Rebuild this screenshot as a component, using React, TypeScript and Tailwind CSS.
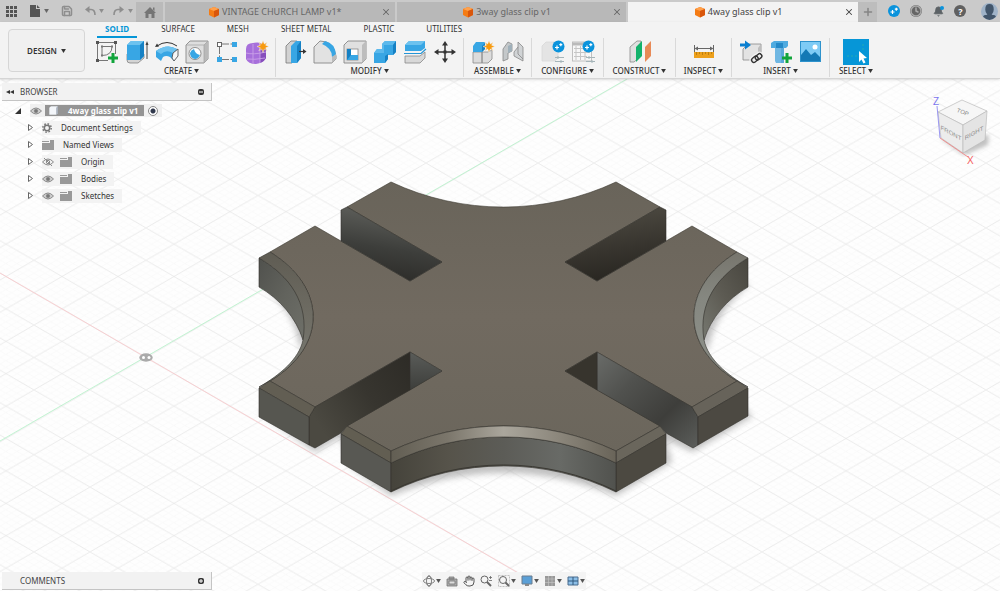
import React, { useState } from 'react';
import { Bell, Clock, Hand, Plus, Save, X } from 'lucide-react';

// ---------- small shared bits ----------

const Caret = ({ className = '' }: { className?: string }) => (
  <svg viewBox="0 0 6 5" className={`w-[5px] h-1 shrink-0 ${className}`} aria-hidden="true">
    <path d="M0 0H6L3 5Z" fill="currentColor" />
  </svg>
);

const OrangeCube = () => (
  <svg viewBox="0 0 12 12" className="size-3 shrink-0" aria-hidden="true">
    <path d="M1 3L6 1L11 3V9L6 11.5L1 9Z" fill="#f57c14" />
    <path d="M1 3L6 1L11 3L6 5Z" fill="#ffa14d" />
    <path d="M6 5L11 3V9L6 11.5Z" fill="#d9560b" />
  </svg>
);

const Star = ({ x, y }: { x: number; y: number }) => (
  <g transform={`translate(${x} ${y})`}>
    <path
      d="M0 -6L1.3 -2.6L4.2 -4.2L2.6 -1.3L6 0L2.6 1.3L4.2 4.2L1.3 2.6L0 6L-1.3 2.6L-4.2 4.2L-2.6 1.3L-6 0L-2.6 -1.3L-4.2 -4.2L-1.3 -2.6Z"
      fill="#f79a0e"
      stroke="#f3f3f3"
      strokeWidth=".5"
    />
  </g>
);

const GreenPlus = ({ x, y }: { x: number; y: number }) => (
  <path d={`M${x - 5} ${y}h10M${x} ${y - 5}v10`} stroke="#12a53c" strokeWidth="3" />
);

const Badge = ({ x, y }: { x: number; y: number }) => (
  <g transform={`translate(${x} ${y})`}>
    <circle r="6" fill="#0a93dc" />
    <path d="M-3.5 1h4M-1.5 -1v4M.8 -1.8h3M2.3 -3.3v3" stroke="#fff" strokeWidth="1.2" />
  </g>
);

const Icon26 = ({ children }: { children: React.ReactNode }) => (
  <svg viewBox="0 0 26 26" className="size-[26px]" fill="none" aria-hidden="true">
    {children}
  </svg>
);

const CurvedArrow = ({ flip = false }: { flip?: boolean }) => (
  <svg viewBox="0 0 12 10" className={`h-[10px] w-3 ${flip ? '-scale-x-100' : ''}`} aria-hidden="true">
    <path d="M2 3.500H6Q10 3.500 10 9" fill="none" stroke="currentColor" strokeWidth="1.600" />
    <path d="M0 3.500L4.500 0V7Z" fill="currentColor" />
  </svg>
);

// ---------- ribbon icons ----------

const icons: Record<string, React.ReactNode> = {
  sketch: (
    <>
      <path d="M3.500 3.500H21.500M3.500 3.500V21.500M21.500 5V15M5 21.500H14" stroke="#777" />
      <path d="M8 7.500H18Q18 16.500 8 16.500Z" stroke="#666" strokeWidth=".9" />
      <path d="M2 2h3v3h-3zM20 2h3v3h-3zM2 20h3v3h-3z" fill="#555" />
      <path d="M7 6.500h2v2h-2zM17 6.500h2v2h-2zM7 15.500h2v2h-2z" fill="#777" />
      <GreenPlus x={19} y={19} />
    </>
  ),
  extrude: (
    <>
      <path d="M3 18V21Q3 24 6 24H14L20 19V15H3Z" fill="#d4d4d4" stroke="#777" strokeWidth=".7" />
      <path d="M3 6L7 2H20V17L16 21H3Z" fill="#38a6e4" />
      <path d="M3 6L7 2H20L16 6Z" fill="#6cc2ef" />
      <path d="M16 6L20 2V17L16 21Z" fill="#1681c4" />
      <path d="M23 4V20" stroke="#444" />
      <path d="M21.500 6L23 2L24.500 6Z" fill="#444" />
    </>
  ),
  revolve: (
    <>
      <path d="M3 7Q13 0 23 7" stroke="#333" />
      <path d="M1 8L3 4.500L5 7.500Z" fill="#333" />
      <path d="M2 12Q13 4 23 10L24 15L20 22L16 18Q12 16 9 18L7 22L2 18Z" fill="#38a6e4" />
      <path d="M2 12Q13 4 23 10L19 14Q12 10 7 15Z" fill="#6cc2ef" />
      <path d="M19 14L24 10V17L20 22L18 19Z" fill="#f6f6f6" stroke="#555" strokeWidth=".9" />
    </>
  ),
  hole: (
    <>
      <path d="M2 6L6 2H24V20L20 24H2Z" fill="#dedede" stroke="#888" strokeWidth=".9" />
      <path d="M20 6L24 2V20L20 24Z" fill="#b9b9b9" />
      <path d="M2 6H20V24M20 6L24 2" stroke="#a0a0a0" strokeWidth=".7" />
      <circle cx="11" cy="14.500" r="6" fill="#fff" stroke="#777" strokeWidth=".8" />
      <path d="M6 14Q7 11 10 10Q11 15 16 16Q14 20 11 20Q6 19 6 14Z" fill="#38a6e4" />
    </>
  ),
  pattern: (
    <>
      <path d="M8 5H18M5.500 8V18M8 20.500H18" stroke="#777" strokeDasharray="7 1.500" />
      <rect x="3.500" y="3.500" width="4" height="4" fill="#fff" stroke="#666" />
      <path d="M18 3h5v5h-5zM3 18h5v5h-5zM18 18h5v5h-5z" fill="#38a6e4" />
    </>
  ),
  form: (
    <>
      <path d="M2 10Q2 4 9 4Q18 2 22 8V19Q19 24 12 25Q4 25 2 20Z" fill="#a76fdb" />
      <path d="M16 9Q23 8 22 13V19Q20 23 16 24Z" fill="#864ebc" />
      <path d="M2 14Q9 16 22 13M9 5V25M16 5V24M3 20Q10 21 21 19" stroke="#c9a0e8" strokeWidth=".9" />
      <Star x={19} y={7.5} />
    </>
  ),
  pressPull: (
    <>
      <path d="M4 7L9 2H15V19L10 24H4Z" fill="#d2d2d2" stroke="#777" strokeWidth=".8" />
      <path d="M9 7L14 2H19V19L15 24H9Z" fill="#38a6e4" />
      <path d="M15 7L19 2V19L15 24Z" fill="#1681c4" />
      <path d="M17 12.500H22" stroke="#333" strokeWidth="1.200" />
      <path d="M21 10L24.500 12.500L21 15Z" fill="#333" />
    </>
  ),
  fillet: (
    <>
      <path d="M2 8L8 2Q22 2 24 17V20L20 24H2Z" fill="#e2e2e2" stroke="#888" strokeWidth=".9" />
      <path d="M10 5L13 2Q23 4 24 16L20 18Q20 9 10 5Z" fill="#38a6e4" />
      <path d="M20 18L24 15V20L20 24Z" fill="#bcbcbc" />
    </>
  ),
  shell: (
    <>
      <path d="M2 6L6 2H24V20L20 24H2Z" fill="#e0e0e0" stroke="#888" strokeWidth=".9" />
      <path d="M20 6L24 2V20L20 24Z" fill="#bdbdbd" />
      <rect x="5" y="10" width="11" height="11" fill="#fff" stroke="#888" strokeWidth=".8" />
      <path d="M5 10L9 10V16L5 21ZM9 16H16V21H5Z" fill="#38a6e4" />
      <path d="M5 10H9V16L5 21Z" fill="#1681c4" />
    </>
  ),
  combine: (
    <>
      <path d="M2 14L5 10H10V5L13 2H24V13L21 16H16V20L13 24H2Z" fill="#38a6e4" />
      <path d="M2 14L5 10H10V5L13 2H24L21 6H12V14Z" fill="#5cb9ec" />
      <path d="M21 6L24 2V13L21 16ZM13 17L16 15V20L13 24Z" fill="#1681c4" />
    </>
  ),
  split: (
    <>
      <path d="M3 6L7 2H23V9L19 12H3Z" fill="#38a6e4" />
      <path d="M3 6L7 2H23L19 6Z" fill="#6cc2ef" />
      <path d="M2 14.500H19L24 10" stroke="#2495d6" strokeWidth="1.200" />
      <path d="M3 17H18L23 13V19L18 24H3Z" fill="#d8d8d8" stroke="#888" strokeWidth=".8" />
    </>
  ),
  move: (
    <>
      <path d="M13 4V22M4 13H22" stroke="#333" strokeWidth="1.500" />
      <path d="M13 2L16 6.500H10ZM13 24L16 19.500H10ZM2 13L6.500 10V16ZM24 13L19.500 10V16Z" fill="#333" />
      <rect x="11.500" y="11.500" width="3" height="3" fill="#333" />
    </>
  ),
  component: (
    <>
      <path d="M3 13H12V24H3ZM12 13H18L22 11V20L18 24H12Z" fill="#dcdcdc" stroke="#888" strokeWidth=".8" />
      <path d="M3 7L6 3H15V10L12 13H3Z" fill="#38a6e4" />
      <path d="M12 7L15 4V10L12 13Z" fill="#1681c4" />
      <Star x={19} y={7.5} />
    </>
  ),
  joint: (
    <>
      <path d="M3 10L8 3L12 5V12L8 14V20L3 22Z" fill="#c4c8ca" stroke="#888" strokeWidth=".8" />
      <path d="M8 7L12 5V12L8 14Z" fill="#9fb0ba" />
      <path d="M14 13L18 8V3L23 8V22L14 17Z" fill="#d0d3d5" stroke="#888" strokeWidth=".8" />
      <path d="M18 8V15L23 20" stroke="#888" strokeWidth=".8" />
    </>
  ),
  configure: (
    <>
      <path d="M2 7L6 3H18V19L15 22H2Z" fill="#e4e4e4" stroke="#d8d8d8" strokeWidth=".8" />
      <path d="M15 18.500H24M15 22.500H24M18 17V20M21 21V24" stroke="#a5b5b9" />
      <Badge x={18.5} y={7.5} />
    </>
  ),
  table: (
    <>
      <rect x="2.500" y="3" width="19" height="19" fill="#f7f7f7" stroke="#c0c0c0" />
      <path d="M2 5H15" stroke="#bababa" strokeWidth="3" />
      <path d="M4 9.500H20M4 13.500H20M4 17.500H17M6 7V21M10.500 7V21M15 7V21" stroke="#c6c6c6" />
      <path d="M16 18.500H25M16 22.500H25M19 17V20M22 21V24" stroke="#a5b5b9" />
      <Badge x={18.5} y={7.5} />
    </>
  ),
  construct: (
    <>
      <path d="M3 8L10 2H14V17L7 23H3Z" fill="#e0e0e0" stroke="#888" strokeWidth=".8" />
      <path d="M9 8L15 2V17L9 23Z" fill="#13b26b" />
      <path d="M18 8L24 2V17L18 23Z" fill="#e88a57" />
    </>
  ),
  inspect: (
    <>
      <path d="M3.500 6V13M22.500 6V13M5 9.500H21" stroke="#666" />
      <path d="M3.500 9.500L7 7.500V11.500ZM22.500 9.500L19 7.500V11.500Z" fill="#666" />
      <rect x="3" y="13" width="20" height="6" fill="#eda01b" />
      <path d="M5.500 13v3M8.500 13v2M11.500 13v3M14.500 13v2M17.500 13v3M20.500 13v2" stroke="#b0770f" strokeWidth=".8" />
    </>
  ),
  insertLink: (
    <>
      <path d="M5 10L10 5H23V17L20 21H5Z" fill="#e3e3e3" stroke="#888" strokeWidth=".8" />
      <path d="M20 9L23 5V17L20 21Z" fill="#bdbdbd" />
      <path d="M2 6H8" stroke="#0a7fd0" strokeWidth="3" />
      <path d="M7 1.500L13 6L7 10.500Z" fill="#0a7fd0" />
      <g stroke="#f2f2f2" strokeWidth="4">
        <rect x="13" y="18.500" width="7" height="4.500" rx="2" transform="rotate(-40 16 20)" />
        <rect x="17" y="16" width="7" height="4.500" rx="2" transform="rotate(-40 20 18)" />
      </g>
      <g stroke="#333" strokeWidth="1.400">
        <rect x="13" y="18.500" width="7" height="4.500" rx="2" transform="rotate(-40 16 20)" />
        <rect x="17" y="16" width="7" height="4.500" rx="2" transform="rotate(-40 20 18)" />
      </g>
    </>
  ),
  bolt: (
    <>
      <path d="M7 8H16V24H8L7 22Z" fill="#70b7e2" />
      <path d="M13 8H16V24H13Z" fill="#5aa8d8" />
      <path d="M3 4L6 2H20V7L18 9H3Z" fill="#4fabe0" />
      <path d="M8 4H15V9H8Z" fill="#2489c8" />
      <GreenPlus x={19} y={19} />
    </>
  ),
  image: (
    <>
      <rect x="2.500" y="2.500" width="20" height="20" fill="#7ecbf5" stroke="#2e92cc" />
      <path d="M3 16L8 10L13 16L17 13L22 18V22H3Z" fill="#1479b5" />
      <circle cx="17" cy="8" r="2.500" fill="#fff" />
    </>
  ),
  select: (
    <>
      <rect width="26" height="26" fill="#0696d7" />
      <path d="M4 17H14M20 5V12" stroke="#25a9b4" strokeDasharray="2 2" />
      <path d="M16 12L24 19L20.500 19.500L22.500 23.500L20.500 24.500L18.500 20.500L16 23Z" fill="#fff" />
    </>
  ),
};

interface ToolGroup {
  name: string;
  width: string;
  tools: string[];
}

const groups: ToolGroup[] = [
  { name: 'CREATE', width: 'w-[188px]', tools: ['sketch', 'extrude', 'revolve', 'hole', 'pattern', 'form'] },
  { name: 'MODIFY', width: 'w-[188px]', tools: ['pressPull', 'fillet', 'shell', 'combine', 'split', 'move'] },
  { name: 'ASSEMBLE', width: 'w-[68px]', tools: ['component', 'joint'] },
  { name: 'CONFIGURE', width: 'w-[72px]', tools: ['configure', 'table'] },
  { name: 'CONSTRUCT', width: 'w-[72px]', tools: ['construct'] },
  { name: 'INSPECT', width: 'w-[56px]', tools: ['inspect'] },
  { name: 'INSERT', width: 'w-[98px]', tools: ['insertLink', 'bolt', 'image'] },
  { name: 'SELECT', width: 'w-[52px]', tools: ['select'] },
];

const workspaceTabs = ['SOLID', 'SURFACE', 'MESH', 'SHEET METAL', 'PLASTIC', 'UTILITIES'];
const documents = ['VINTAGE CHURCH LAMP v1*', '3way glass clip v1', '4way glass clip v1'];

// ---------- title bar ----------

const TitleBar = () => (
  <header className="flex h-[22px] shrink-0 bg-[#cacaca] text-[#666]">
    <div className="flex w-[136px] shrink-0 items-center pl-[6px]">
      <button aria-label="Data panel" className="mr-[13px]">
        <svg viewBox="0 0 11 11" className="size-[11px]" fill="#555">
          {[0, 4, 8].map((y) => [0, 4, 8].map((x) => <rect key={`${x}${y}`} x={x} y={y} width="3" height="3" />))}
        </svg>
      </button>
      <button aria-label="File" className="mr-3 flex items-center gap-1">
        <svg viewBox="0 0 10 12" className="h-3 w-[10px]" fill="#555">
          <path d="M0 0H6V4H10V12H0ZM7 0L10 3H7Z" />
        </svg>
        <Caret />
      </button>
      <button aria-label="Save" className="mr-3 text-[#8e8e8e]">
        <Save size={12} strokeWidth={3} />
      </button>
      <button aria-label="Undo" className="mr-2 flex items-center gap-0.5 text-[#8e8e8e]">
        <CurvedArrow />
        <Caret />
      </button>
      <button aria-label="Redo" className="flex items-center gap-1 text-[#8e8e8e]">
        <CurvedArrow flip />
        <Caret />
      </button>
    </div>
    <button aria-label="Home" className="mr-0.5 mt-0.5 flex w-[27px] shrink-0 items-center justify-center bg-[#bababa]">
      <svg viewBox="0 0 12 12" className="size-3" fill="#757575">
        <path d="M6 1L12 7H10.500V12H7.500V8H4.500V12H1.500V7H0ZM9 1.500H10.500V5L9 3.500Z" />
      </svg>
    </button>
    <nav className="flex min-w-0 flex-1 gap-0.5 pt-0.5">
      {documents.map((doc, i) => (
        <div
          key={doc}
          className={`flex min-w-0 flex-1 items-center px-1 ${i === 2 ? 'bg-[#f3f3f3] text-[#444]' : 'bg-[#b8b8b8] text-[#666]'}`}
        >
          <button className="flex min-w-0 flex-1 items-center justify-center gap-0.5 whitespace-nowrap text-[9px] leading-3">
            <OrangeCube />
            {doc}
          </button>
          <button aria-label={`Close ${doc}`}>
            <X size={10} strokeWidth={2.5} />
          </button>
        </div>
      ))}
    </nav>
    <div className="flex w-[142px] shrink-0 items-center justify-between pr-0.5">
      <button aria-label="New document" className="mt-0.5 flex h-5 w-[19px] items-center justify-center bg-[#bdbdbd]">
        <Plus size={12} strokeWidth={3} className="text-[#858585]" />
      </button>
      <button aria-label="Extensions">
        <svg viewBox="0 0 12 12" className="size-3">
          <Badge x={6} y={6} />
        </svg>
      </button>
      <button aria-label="Job status" className="rounded-full bg-[#666]">
        <Clock size={12} strokeWidth={3} className="text-[#aaa]" />
      </button>
      <button aria-label="Notifications" className="relative">
        <Bell size={11} fill="#5c6266" className="text-[#5c6266]" />
        <span className="absolute right-0 top-0 size-1 rounded-full bg-[#0a93dc]" />
      </button>
      <button
        aria-label="Help"
        className="flex size-3 items-center justify-center rounded-full bg-[#606060] text-[9px] font-bold leading-none text-white"
      >
        ?
      </button>
      <button aria-label="Account" className="ml-1">
        <svg viewBox="0 0 16 16" className="size-[17px]">
          <circle cx="8" cy="8" r="8" fill="#9fb3c8" />
          <path d="M4 6Q4 1 8 1Q12 1 12 6Q12 9 10 11Q14 11 14 13Q11 16 8 16Q5 16 2 13Q2 11 6 11Q4 9 4 6Z" fill="#42566b" />
        </svg>
      </button>
    </div>
  </header>
);

// ---------- ribbon ----------

const Ribbon = () => {
  const [activeTab, setActiveTab] = useState('SOLID');

  return (
    <section className="relative z-10 flex h-[57px] shrink-0 border-b border-[#d5d5d5] bg-[#f3f3f3] text-[#333] shadow-sm">
      <div className="w-[88px] shrink-0 pl-2 pt-[7px]">
        <button className="flex h-[43px] w-[77px] items-center justify-center gap-1 rounded-sm border border-[#d6d6d6] bg-[#f0f0f0] text-[8px] font-semibold">
          DESIGN
          <Caret />
        </button>
      </div>
      <div className="min-w-0 flex-1">
        <nav className="flex h-4 gap-4 pl-[9px]">
          {workspaceTabs.map((tab) => (
            <button
              key={tab}
              onClick={() => setActiveTab(tab)}
              className={`whitespace-nowrap border-b-2 px-2 text-[8px] leading-3 ${
                tab === activeTab ? 'border-[#0696d7] font-bold text-[#0696d7]' : 'border-transparent'
              }`}
            >
              {tab}
            </button>
          ))}
        </nav>
        <div className="flex">
          {groups.map((group) => (
            <div
              key={group.name}
              className={`flex shrink-0 flex-col items-center border-r border-[#d9d9d9] last:border-r-0 ${group.width}`}
            >
              <div className="flex pt-px">
                {group.tools.map((tool) => (
                  <button key={tool} aria-label={tool} className="flex w-[30px] justify-center">
                    <Icon26>{icons[tool]}</Icon26>
                  </button>
                ))}
              </div>
              <button className="flex items-center gap-0.5 whitespace-nowrap text-[8px] font-medium leading-3">
                {group.name}
                <Caret />
              </button>
            </div>
          ))}
        </div>
      </div>
    </section>
  );
};

// ---------- browser tree ----------

const Eye = ({ hidden = false }: { hidden?: boolean }) => (
  <svg viewBox="0 0 12 8" className="h-2 w-3 shrink-0" fill="none" stroke="#8a8a8a" aria-hidden="true">
    <path d="M.5 4Q6 -2 11.500 4Q6 10 .5 4Z" fill={hidden ? 'none' : '#ccc'} />
    <circle cx="6" cy="4" r="1.700" fill={hidden ? 'none' : '#777'} />
    {hidden && <path d="M2 0L10 8" />}
  </svg>
);

const Folder = () => (
  <svg viewBox="0 0 12 10" className="h-[10px] w-3 shrink-0" fill="#999" aria-hidden="true">
    <path d="M0 1H7V2H0ZM8 0H12V10H0V3H8Z" />
  </svg>
);

const Gear = () => (
  <svg viewBox="0 0 10 10" className="size-[10px] shrink-0" fill="none" stroke="#777" aria-hidden="true">
    <circle cx="5" cy="5" r="2.700" strokeWidth="1.500" />
    <circle cx="5" cy="5" r="4.200" strokeDasharray="1.600 1.700" strokeWidth="1.500" />
  </svg>
);

const nodes = [
  { label: 'Document Settings', icon: <Gear /> },
  { label: 'Named Views', icon: <Folder /> },
  { label: 'Origin', icon: <Folder />, eye: 'off' },
  { label: 'Bodies', icon: <Folder />, eye: 'on' },
  { label: 'Sketches', icon: <Folder />, eye: 'on' },
];

const PanelBar = ({ title, sign, arrows }: { title: string; sign: string; arrows?: boolean }) => (
  <div className="flex h-[18px] items-center border-b border-r border-[#c4c4c4] bg-[#f2f2f2] pl-1 pr-[7px] text-[8px] text-[#444]">
    <span className="flex w-[14px]">
      {arrows && (
        <svg viewBox="0 0 8 6" className="h-[6px] w-2" fill="#333">
          <path d="M4 1V5L0 3ZM8 1V5L4 3Z" />
        </svg>
      )}
    </span>
    <span className="flex-1">{title}</span>
    <button aria-label={`Toggle ${title}`}>
      <svg viewBox="0 0 6 6" className="size-[6px]">
        <rect width="6" height="6" rx="2" fill="#333" />
        <path d={sign} stroke="#fff" />
      </svg>
    </button>
  </div>
);

const Browser = () => (
  <aside className="absolute left-0.5 top-1 w-[210px] text-[8px] text-[#333]">
    <PanelBar title="BROWSER" sign="M1 3H5" arrows />
    <div className="mt-px flex h-[17px] items-center pl-[13px]">
      <svg viewBox="0 0 6 6" className="mr-[9px] size-[6px]">
        <path d="M6 0V6H0Z" fill="#333" />
      </svg>
      <div className="flex h-[13px] items-center bg-[#f0f0f0] pr-1">
        <Eye />
        <button className="ml-[3px] flex h-[11px] items-center gap-[10px] bg-[#949494] pl-1 pr-[6px] font-bold text-white">
          <svg viewBox="0 0 10 10" className="size-[9px]">
            <path d="M0 2L2 0H10V8L8 10H0Z" fill="#f3f6fa" stroke="#777" strokeWidth=".5" />
            <path d="M8 2L10 0V8L8 10Z" fill="#a8b0bb" />
          </svg>
          4way glass clip v1
        </button>
        <label className="ml-1 flex">
          <input
            type="radio"
            aria-label="Activate component"
            defaultChecked
            className="size-[10px] appearance-none rounded-full border border-[#888] bg-[radial-gradient(circle,#30384c_2px,#fff_3px)]"
          />
        </label>
      </div>
    </div>
    <ul className="pl-[26px]">
      {nodes.map((node) => (
        <li key={node.label} className="flex h-[17px] items-center">
          <button aria-label={`Expand ${node.label}`} className="mr-[9px]">
            <svg viewBox="0 0 5 7" className="h-[7px] w-[5px]" fill="#fff" stroke="#666">
              <path d="M.5 .5L4.500 3.500L.5 6.500Z" />
            </svg>
          </button>
          <div className="flex h-[14px] items-center gap-[9px] bg-[#f3f3f3] pr-2">
            <span className="flex items-center gap-[6px]">
              {node.eye && <Eye hidden={node.eye === 'off'} />}
              {node.icon}
            </span>
            {node.label}
          </div>
        </li>
      ))}
    </ul>
  </aside>
);

// ---------- canvas ----------

// Faces are listed back to front: [path, fill]
const faces: [string, string][] = [
  // upper slots
  ['M341 210L347 207L442 262L410 281L341 241Z', 'url(#slotCool)'],
  ['M666 210L660 207L565 262L597 281L666 241Z', 'url(#slotWarm)'],
  // lower left slot
  ['M410 352L315 407L309 417V445L315 448L341 433L347 426L410 390Z', 'url(#slotLow)'],
  ['M410 352L442 371L410 390Z', 'url(#slotEnd)'],
  // lower right slot
  ['M597 352L692 407L698 417V445L693 448L666 433L660 426L597 390Z', 'url(#slotLowCool)'],
  ['M597 352L565 371L597 390Z', '#37342d'],
  // left concave wall
  ['M259 258V287C280 299 296 318 303 340L306 330C308 303 290 276 259 258Z', 'url(#wallLeft)'],
  ['M270 252L259 258C290 276 309 303 303 340C299 359 280 375 259 387L270 381C328 346 327 287 270 252Z', 'url(#bandLeft)'],
  // right concave wall
  ['M748 258V287C727 299 711 318 704 340L701 330C699 303 717 276 748 258Z', 'url(#wallRight)'],
  ['M737 252L748 258C717 276 698 303 704 340C708 359 727 375 748 387L737 381C679 346 680 287 737 252Z', 'url(#bandRight)'],
  // arm ends
  ['M270 381L315 407L309 417L259 388Z', '#625e53'],
  ['M259 388L309 417V445L259 417Z', '#565650'],
  ['M737 381L692 407L698 417L748 388Z', '#67635a'],
  ['M748 388L698 417V445L748 416Z', '#4c4942'],
  ['M347 426L391 451V463L341 434Z', '#625e52'],
  ['M341 434L391 463V492L341 463Z', '#585853'],
  ['M660 426L616 451V463L666 434Z', '#6a665c'],
  ['M666 434L616 463V492L666 463Z', '#4c4941'],
  // front arc
  ['M391 463A256 256 0 0 1 616 463V492A256 256 0 0 0 391 492Z', 'url(#wallFront)'],
  ['M391 451A265 265 0 0 1 616 451V463A256 256 0 0 0 391 463Z', 'url(#bandFront)'],
];

const topFace =
  'M391 182A265 265 0 0 0 616 182L660 207L565 262L597 281L692 226L737 252C680 287 679 346 737 381L692 407L597 352L565 371L660 426L616 451A265 265 0 0 0 391 451L347 426L442 371L410 352L315 407L270 381C328 346 327 287 270 252L315 226L410 281L442 262L347 207Z';

const Model = () => (
  <g>
    <g filter="url(#soft)" fill="#8f8f8f" opacity=".55">
      <path d="M259 412L315 452L341 437L350 466L391 496Q503 450 616 496L672 462L666 440L693 452L752 417L740 400L600 380H400Z" />
      <path d="M259 282C283 301 297 322 300 350L312 330L290 280Z" />
      <path d="M750 284C726 305 712 324 708 352L694 330L716 280Z" />
    </g>
    <path d={topFace} fill="url(#top)" stroke="#3a372f" strokeWidth=".6" />
    {faces.map(([d, fill]) => (
      <path key={d} d={d} fill={fill} stroke="#33302b" strokeWidth=".6" strokeLinejoin="round" />
    ))}
    <path d="M391 491A256 256 0 0 1 616 491" fill="none" stroke="#3a3832" />
  </g>
);

const gradient = (id: string, stops: string[], x2: number, y2: number, x1 = 0, y1 = 0) => (
  <linearGradient id={id} x1={x1} y1={y1} x2={x2} y2={y2}>
    {stops.map((color, i) => (
      <stop key={i} offset={i / (stops.length - 1)} stopColor={color} />
    ))}
  </linearGradient>
);

const Canvas = () => (
  <svg
    viewBox="0 79 1000 512"
    preserveAspectRatio="xMidYMid slice"
    className="absolute inset-0 size-full"
    role="img"
    aria-label="4way glass clip model"
  >
    <defs>
      <pattern id="minor" x="146" y="357.5" width="11.2" height="6.48" patternUnits="userSpaceOnUse">
        <path d="M0 0L11.2 6.48M0 6.48L11.2 0" stroke="#f8f8f8" strokeWidth=".6" />
      </pattern>
      <pattern id="major" x="146" y="357.5" width="56" height="32.4" patternUnits="userSpaceOnUse">
        <path d="M0 0L56 32.4M0 32.4L56 0" stroke="#e8e8e8" strokeWidth=".8" />
      </pattern>
      <filter id="soft">
        <feGaussianBlur stdDeviation="3" />
      </filter>
      {gradient('top', ['#69645a', '#716a60', '#6b665c'], 0, 1)}
      {gradient('slotCool', ['#5b5c58', '#3d3e3b', '#2b2a27'], 0.3, 1, 0.5, 0.1)}
      {gradient('slotWarm', ['#4a473f', '#37342e', '#26241f'], 0.7, 1, 0.5, 0.1)}
      {gradient('slotLow', ['#4b4941', '#37352f', '#2d2b26'], 1, 0, 0, 0.6)}
      {gradient('slotEnd', ['#5a5c59', '#3d3e3b'], 0, 1)}
      {gradient('slotLowCool', ['#6a6c69', '#50514e', '#3e3e3b', '#5c5e5b'], 1, 1)}
      {gradient('wallLeft', ['#50514d', '#62635d', '#6f7069'], 1, 1)}
      {gradient('wallRight', ['#48463f', '#5d5b53', '#777971'], 0, 1, 1, 0)}
      {gradient('bandLeft', ['#5f5c53', '#6f6d64', '#7b7d76'], 0, 1)}
      {gradient('bandRight', ['#77756d', '#858780', '#8b8e87', '#77776f'], 0, 1)}
      {gradient('wallFront', ['#45433b', '#56534a', '#5c5c57', '#686a66', '#51524e'], 1, 0)}
      {gradient('bandFront', ['#625e53', '#7b766b', '#aaa69c', '#8b867b', '#696459'], 1, 0)}
    </defs>
    <rect y="79" width="1000" height="512" fill="#fefefe" />
    <rect y="79" width="1000" height="512" fill="url(#minor)" />
    <rect y="79" width="1000" height="512" fill="url(#major)" />
    <path d="M0 273L546 589" stroke="#f9c6c9" strokeWidth=".8" />
    <path d="M0 441L627 79" stroke="#b4f2c8" strokeWidth=".8" />
    <g fill="#fff" stroke="#aaa" strokeWidth="1.5">
      <ellipse cx="146" cy="357.500" rx="6" ry="3.500" fill="#aaa" />
      <circle cx="143.500" cy="357.500" r="1.500" stroke="none" />
      <circle cx="149" cy="357.500" r="1.500" stroke="none" />
    </g>
    <Model />
  </svg>
);

const ViewCube = () => (
  <svg viewBox="0 0 72 74" className="absolute right-0 top-[13px] h-[74px] w-[72px]" role="img" aria-label="View cube">
    <defs>
      <filter id="cubeShadow">
        <feGaussianBlur stdDeviation="2" />
      </filter>
    </defs>
    <path d="M12 46L36 63L60 53L61 43Z" fill="#999" opacity=".6" filter="url(#cubeShadow)" />
    <path d="M10 20L34 8L59 19L35 33Z" fill="#f6f6f6" stroke="#bbb" strokeWidth=".7" />
    <path d="M10 20L35 33V61L13 46Z" fill="#ececec" stroke="#bbb" strokeWidth=".7" />
    <path d="M35 33L59 19L57 48L35 61Z" fill="#e4e4e4" stroke="#bbb" strokeWidth=".7" />
    <g className="font-['Liberation_Sans'] text-[6px]" fill="#8c8c8c" textAnchor="middle">
      <text transform="translate(23 43) skewY(29)">FRONT</text>
      <text transform="translate(46 43) skewY(-29)">RIGHT</text>
      <text transform="translate(34 22) rotate(22)">TOP</text>
    </g>
    <path d="M9 14L12 46" stroke="#9a96f2" />
    <path d="M12 46L40 65" stroke="#f09090" />
    <g className="font-['Liberation_Sans'] text-[10px]">
      <text x="5" y="13" fill="#7a75ee">Z</text>
      <text x="39" y="72" fill="#f46060">X</text>
    </g>
  </svg>
);

const NavBar = () => (
  <nav className="absolute bottom-0.5 left-1/2 flex h-[17px] w-[164px] -translate-x-[78px] items-center justify-between bg-[#f4f4f4] px-px text-[#555]">
    <button aria-label="Orbit" className="flex items-center gap-px">
      <svg viewBox="0 0 12 12" className="size-3" fill="none" stroke="#777" strokeWidth=".9">
        <ellipse cx="6" cy="6" rx="5.500" ry="2.500" />
        <ellipse cx="6" cy="6" rx="2.500" ry="5" />
        <path d="M4 3L6 .5L8 3M4 9L6 11.500L8 9" />
      </svg>
      <Caret />
    </button>
    <button aria-label="Look at">
      <svg viewBox="0 0 12 12" className="size-3" fill="#aaa" stroke="#777" strokeWidth=".8">
        <path d="M1 4H11V11H1ZM3 2H8V4H3Z" />
        <path d="M3 6H9V9H3Z" fill="#ddd" />
      </svg>
    </button>
    <button aria-label="Pan">
      <Hand size={12} />
    </button>
    <button aria-label="Zoom">
      <svg viewBox="0 0 12 12" className="size-3" fill="none" stroke="#666">
        <circle cx="4.500" cy="4.500" r="3.500" />
        <path d="M7 7L11 11" strokeWidth="2" />
        <path d="M9 2.500H12M10.500 1V4M9 5.500H12" strokeWidth=".8" />
      </svg>
    </button>
    <button aria-label="Fit" className="flex items-center gap-px">
      <svg viewBox="0 0 12 12" className="size-3" fill="none" stroke="#666">
        <path d="M.5 .5H11.500V11.500H.5Z" stroke="#aaa" strokeDasharray="2 1" strokeWidth=".7" />
        <circle cx="5" cy="5" r="3.500" />
        <path d="M7.500 7.500L11 11" strokeWidth="2" />
      </svg>
      <Caret />
    </button>
    <button aria-label="Display settings" className="flex items-center gap-px">
      <svg viewBox="0 0 12 12" className="size-3">
        <path d="M1 1H11V9H1Z" fill="#5b9fd6" stroke="#6a7d8e" />
        <path d="M4 9H8V11H4Z" fill="#888" />
      </svg>
      <Caret />
    </button>
    <button aria-label="Grid and snaps" className="flex items-center gap-px">
      <svg viewBox="0 0 12 12" className="size-3">
        <path d="M1 1H11V11H1Z" fill="#999" />
        <path d="M1 4H11M1 7.500H11M4.500 1V11M8 1V11" stroke="#c7c7c7" strokeWidth=".6" />
      </svg>
      <Caret />
    </button>
    <button aria-label="Viewports" className="flex items-center gap-px">
      <svg viewBox="0 0 12 12" className="size-3">
        <path d="M1 2H11V10H1Z" fill="#8cbfe8" stroke="#4a6d8e" />
        <path d="M6 2V10M1 6H11" stroke="#31587c" />
      </svg>
      <Caret />
    </button>
  </nav>
);

const App: React.FC = () => {
  return (
    <div className="flex h-screen flex-col overflow-hidden bg-white font-['Noto_Sans',sans-serif]">
      <TitleBar />
      <Ribbon />
      <main className="relative min-h-0 flex-1">
        <Canvas />
        <Browser />
        <ViewCube />
        <div className="absolute bottom-px left-0.5 w-[210px]">
          <PanelBar title="COMMENTS" sign="M1 3H5M3 1V5" />
        </div>
        <NavBar />
      </main>
    </div>
  );
};

export default App;
